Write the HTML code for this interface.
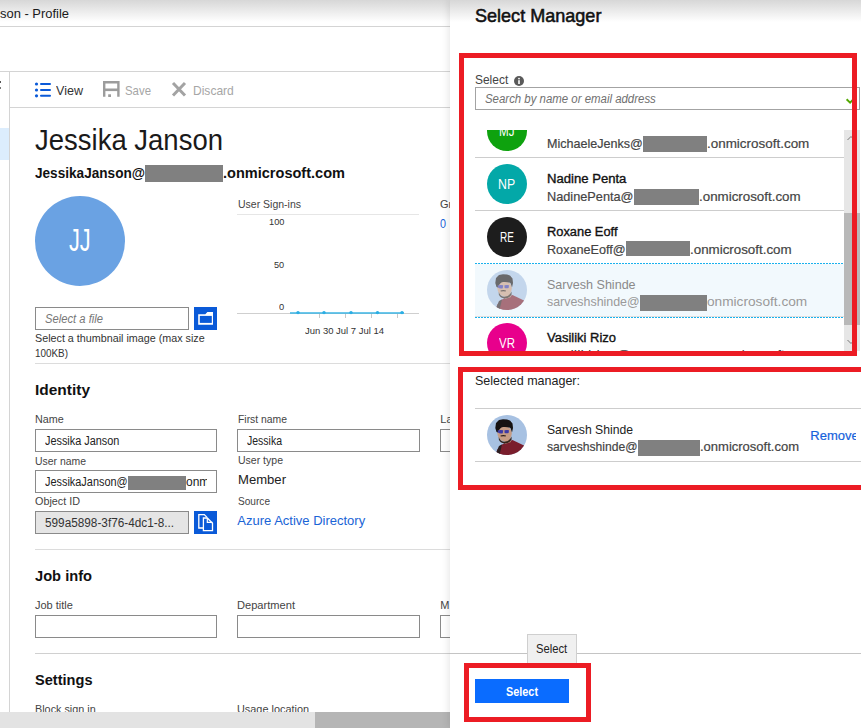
<!DOCTYPE html>
<html><head><meta charset="utf-8">
<style>
html,body{margin:0;padding:0;width:861px;height:728px;overflow:hidden;background:#fff;}
body{position:relative;font-family:"Liberation Sans",sans-serif;}
.a{position:absolute;}
.t{position:absolute;white-space:nowrap;}
.cl{position:absolute;left:0;top:0;width:861px;height:728px;}
.hl{position:absolute;height:1px;}
.vl{position:absolute;width:1px;}
.inp{position:absolute;box-sizing:border-box;border:1px solid #8a8a8a;background:#fff;}
.red{position:absolute;box-sizing:border-box;border:5px solid #ec1c24;}
.rdx{position:absolute;background:#808080;}
.av{position:absolute;width:40px;height:40px;border-radius:50%;}
.sep{position:absolute;left:475px;width:369px;height:1px;background:#cdcdcd;}
</style></head><body>

<!-- top gradient (whole width) -->
<div class="a" style="left:0;top:0;width:861px;height:22px;background:linear-gradient(#d7d7d7,#ffffff)"></div>

<!-- ================= LEFT BLADE ================= -->
<div class="hl" style="left:0;top:26px;width:450px;background:#d4d4d4"></div>
<div class="hl" style="left:0;top:71px;width:450px;background:#d4d4d4"></div>
<div class="vl" style="left:9px;top:71px;height:657px;background:#d4d4d4"></div>
<div class="a" style="left:0;top:128px;width:9px;height:32px;background:#dcedfd"></div>
<div class="a" style="left:0;top:81px;width:1px;height:2px;background:#555"></div>
<div class="a" style="left:0;top:87px;width:1px;height:2px;background:#777"></div>
<div class="hl" style="left:9px;top:107px;width:441px;background:#d4d4d4"></div>

<!-- toolbar icons -->
<svg class="a" style="left:33px;top:81px" width="20" height="18" viewBox="0 0 20 18">
  <g fill="#0b5ad8">
    <circle cx="3.5" cy="3" r="1.6"/><circle cx="3.5" cy="9" r="1.6"/><circle cx="3.5" cy="14.8" r="1.6"/>
    <rect x="7" y="2.1" width="11" height="2" rx="1"/><rect x="7" y="8" width="11" height="2" rx="1"/><rect x="7" y="13.8" width="11" height="2" rx="1"/>
  </g>
</svg>
<svg class="a" style="left:103px;top:81px" width="17" height="17" viewBox="0 0 17 17">
  <path d="M1.2 15.8V1.2h14.2v14.6" fill="none" stroke="#9c9c9c" stroke-width="2.4"/>
  <rect x="1.2" y="7.5" width="14.2" height="2.6" fill="#9c9c9c"/>
  <rect x="5.2" y="13.3" width="2.8" height="2.7" fill="#9c9c9c"/>
</svg>
<svg class="a" style="left:171px;top:81px" width="16" height="17" viewBox="0 0 16 17">
  <path d="M2 2L14 14.5M14 2L2 14.5" stroke="#a3a3a3" stroke-width="3"/>
</svg>

<!-- avatar JJ -->
<div class="a" style="left:35px;top:196px;width:90px;height:90px;border-radius:50%;background:#6aa2e3"></div>
<div class="t" style="left:68.5px;top:225px;font-size:31px;line-height:31px;color:#fff;transform:scaleX(0.7);transform-origin:0 0">JJ</div>

<!-- chart -->
<div class="hl" style="left:237px;top:214px;width:182px;background:#e6e6e6"></div>
<div class="hl" style="left:237px;top:313px;width:182px;background:#cfcfcf"></div>
<svg class="a" style="left:237px;top:305px" width="182" height="14" viewBox="0 0 182 14">
  <g stroke="#c8c8c8" stroke-width="1"><path d="M82.5 8v5M108.5 8v5M134.5 8v5M160.5 8v5"/></g>
  <path d="M53 8.1H167" stroke="#3ab4e4" stroke-width="1.5"/>
  <g fill="#2aaee4"><circle cx="61" cy="7.6" r="1.7"/><circle cx="87" cy="7.6" r="1.7"/><circle cx="114" cy="7.6" r="1.7"/><circle cx="140.5" cy="7.6" r="1.7"/><circle cx="165" cy="7.6" r="1.7"/></g>
</svg>

<!-- file input -->
<div class="inp" style="left:35px;top:307px;width:154px;height:23px"></div>
<div class="a" style="left:194px;top:307px;width:23px;height:23px;background:#0a5ad8"></div>
<svg class="a" style="left:197px;top:311px" width="17" height="15" viewBox="0 0 17 15">
  <path d="M1.2 3.3H8.3L10.4 1H16V13.7H1.2Z" fill="#fff"/>
  <rect x="2.8" y="4.9" width="12" height="7" fill="#0a5ad8"/>
</svg>
<div class="hl" style="left:35px;top:363px;width:415px;background:#dcdcdc"></div>

<!-- identity inputs -->
<div class="inp" style="left:35px;top:429px;width:182px;height:23px"></div>
<div class="inp" style="left:237px;top:429px;width:183px;height:23px"></div>
<div class="inp" style="left:440px;top:429px;width:60px;height:23px"></div>
<div class="inp" style="left:35px;top:470px;width:182px;height:23px"></div>
<div class="rdx" style="left:128px;top:476px;width:58px;height:14px"></div>
<div class="inp" style="left:35px;top:511px;width:154px;height:23px;background:#e5e5e5"></div>
<div class="a" style="left:194px;top:511px;width:23px;height:23px;background:#0a5ad8"></div>
<svg class="a" style="left:194px;top:511px" width="23" height="23" viewBox="0 0 23 23">
  <path d="M9 17H4.8V3.6H10.3L13 6.4" fill="none" stroke="#fff" stroke-width="1.3"/>
  <path d="M9.4 7H13.3L18.5 12.3V19.6H9.4Z" fill="#0a5ad8" stroke="#fff" stroke-width="1.3"/>
  <path d="M13.3 7V11.3H18.5" fill="none" stroke="#fff" stroke-width="1.2"/>
</svg>
<div class="hl" style="left:35px;top:549px;width:415px;background:#dcdcdc"></div>

<!-- job info inputs -->
<div class="inp" style="left:35px;top:615px;width:182px;height:23px"></div>
<div class="inp" style="left:237px;top:615px;width:183px;height:23px"></div>
<div class="inp" style="left:440px;top:615px;width:60px;height:23px"></div>
<div class="hl" style="left:35px;top:653px;width:415px;background:#d0d0d0"></div>

<!-- redaction in header email -->
<div class="rdx" style="left:145px;top:165px;width:78px;height:17px"></div>

<div class="t" style="left:0.3px;top:6.60px;font-size:13px;line-height:13px;color:#1a1a1a;transform:scaleX(0.9948);transform-origin:0 0;">son - Profile</div>
<div class="t" style="left:56.0px;top:83.70px;font-size:13px;line-height:13px;color:#333;transform:scaleX(0.9662);transform-origin:0 0;">View</div>
<div class="t" style="left:124.5px;top:83.70px;font-size:13px;line-height:13px;color:#a6a6a6;transform:scaleX(0.8774);transform-origin:0 0;">Save</div>
<div class="t" style="left:193.2px;top:83.70px;font-size:13px;line-height:13px;color:#a6a6a6;transform:scaleX(0.9259);transform-origin:0 0;">Discard</div>
<div class="t" style="left:34.5px;top:125.75px;font-size:29px;line-height:29px;color:#1a1a1a;transform:scaleX(0.9482);transform-origin:0 0;">Jessika Janson</div>
<div class="t" style="left:35.0px;top:164.80px;font-size:15px;line-height:15px;color:#111;font-weight:700;transform:scaleX(0.9064);transform-origin:0 0;">JessikaJanson@</div>
<div class="t" style="left:223.0px;top:164.80px;font-size:15px;line-height:15px;color:#111;font-weight:700;transform:scaleX(0.9694);transform-origin:0 0;">.onmicrosoft.com</div>
<div class="t" style="left:238.0px;top:198.99px;font-size:11px;line-height:11px;color:#444;transform:scaleX(0.9542);transform-origin:0 0;">User Sign-ins</div>
<div class="t" style="left:268.6px;top:218.15px;font-size:8.8px;line-height:8.8px;color:#333;transform:scaleX(1.0488);transform-origin:0 0;">100</div>
<div class="t" style="left:273.7px;top:260.85px;font-size:8.8px;line-height:8.8px;color:#333;transform:scaleX(1.042);transform-origin:0 0;">50</div>
<div class="t" style="left:278.8px;top:303.35px;font-size:8.8px;line-height:8.8px;color:#333;transform:scaleX(1.0623);transform-origin:0 0;">0</div>
<div class="t" style="left:305.0px;top:326.17px;font-size:9.6px;line-height:9.6px;color:#333;transform:scaleX(0.9868);transform-origin:0 0;">Jun 30 Jul 7 Jul 14</div>
<div class="t" style="left:440.0px;top:198.69px;font-size:11px;line-height:11px;color:#444;">Gr</div>
<div class="t" style="left:440.0px;top:216.70px;font-size:13px;line-height:13px;color:#1a5fd8;transform:scaleX(0.8297);transform-origin:0 0;">0</div>
<div class="t" style="left:45.0px;top:312.64px;font-size:12px;line-height:12px;color:#777;font-style:italic;transform:scaleX(0.935);transform-origin:0 0;">Select a file</div>
<div class="t" style="left:35.0px;top:332.89px;font-size:11px;line-height:11px;color:#333;transform:scaleX(0.9774);transform-origin:0 0;">Select a thumbnail image (max size</div>
<div class="t" style="left:35.0px;top:347.99px;font-size:11px;line-height:11px;color:#333;transform:scaleX(0.8994);transform-origin:0 0;">100KB)</div>
<div class="t" style="left:35.0px;top:381.80px;font-size:15px;line-height:15px;color:#111;font-weight:700;transform:scaleX(1.0312);transform-origin:0 0;">Identity</div>
<div class="t" style="left:35.0px;top:414.19px;font-size:11px;line-height:11px;color:#444;transform:scaleX(0.9781);transform-origin:0 0;">Name</div>
<div class="t" style="left:237.8px;top:414.39px;font-size:11px;line-height:11px;color:#444;transform:scaleX(0.9431);transform-origin:0 0;">First name</div>
<div class="t" style="left:440.3px;top:414.39px;font-size:11px;line-height:11px;color:#444;">La</div>
<div class="t" style="left:45.0px;top:434.54px;font-size:12px;line-height:12px;color:#222;transform:scaleX(0.9068);transform-origin:0 0;">Jessika Janson</div>
<div class="t" style="left:247.0px;top:434.54px;font-size:12px;line-height:12px;color:#222;transform:scaleX(0.8747);transform-origin:0 0;">Jessika</div>
<div class="t" style="left:35.0px;top:455.59px;font-size:11px;line-height:11px;color:#444;transform:scaleX(0.948);transform-origin:0 0;">User name</div>
<div class="t" style="left:237.8px;top:455.39px;font-size:11px;line-height:11px;color:#444;transform:scaleX(0.956);transform-origin:0 0;">User type</div>
<div class="t" style="left:45.0px;top:475.84px;font-size:12px;line-height:12px;color:#222;transform:scaleX(0.9088);transform-origin:0 0;">JessikaJanson@</div>
<div class="cl" style="clip-path:inset(470px 654px 235px 186px)"><div class="t" style="left:186.0px;top:475.84px;font-size:12px;line-height:12px;color:#222;">onm</div></div>
<div class="t" style="left:237.8px;top:473.00px;font-size:13px;line-height:13px;color:#222;transform:scaleX(1.0068);transform-origin:0 0;">Member</div>
<div class="t" style="left:35.0px;top:496.19px;font-size:11px;line-height:11px;color:#444;transform:scaleX(0.9815);transform-origin:0 0;">Object ID</div>
<div class="t" style="left:237.8px;top:495.69px;font-size:11px;line-height:11px;color:#444;transform:scaleX(0.9181);transform-origin:0 0;">Source</div>
<div class="t" style="left:45.0px;top:516.54px;font-size:12px;line-height:12px;color:#333;transform:scaleX(0.9815);transform-origin:0 0;">599a5898-3f76-4dc1-8...</div>
<div class="t" style="left:237.3px;top:513.70px;font-size:13px;line-height:13px;color:#1a64d6;">Azure Active Directory</div>
<div class="t" style="left:35.0px;top:567.90px;font-size:15px;line-height:15px;color:#111;font-weight:700;transform:scaleX(0.9773);transform-origin:0 0;">Job info</div>
<div class="t" style="left:35.0px;top:599.59px;font-size:11px;line-height:11px;color:#444;">Job title</div>
<div class="t" style="left:237.3px;top:599.59px;font-size:11px;line-height:11px;color:#444;transform:scaleX(1.0092);transform-origin:0 0;">Department</div>
<div class="t" style="left:440.3px;top:599.59px;font-size:11px;line-height:11px;color:#444;">M</div>
<div class="t" style="left:35.0px;top:672.30px;font-size:15px;line-height:15px;color:#111;font-weight:700;transform:scaleX(0.9717);transform-origin:0 0;">Settings</div>
<div class="t" style="left:35.0px;top:703.89px;font-size:11px;line-height:11px;color:#444;transform:scaleX(0.9829);transform-origin:0 0;">Block sign in</div>
<div class="t" style="left:237.3px;top:703.89px;font-size:11px;line-height:11px;color:#444;transform:scaleX(0.9894);transform-origin:0 0;">Usage location</div>

<!-- bottom scrollbar -->
<div class="a" style="left:0;top:712px;width:450px;height:16px;background:#e3e3e3"></div>
<div class="a" style="left:315px;top:712px;width:135px;height:16px;background:#b5b5b5"></div>

<!-- ================= RIGHT BLADE ================= -->
<div class="a" style="left:450px;top:0;width:411px;height:728px;background:#fff;box-shadow:-2px 0 7px rgba(0,0,0,0.09)"></div>
<div class="a" style="left:450px;top:0;width:411px;height:22px;background:linear-gradient(#d7d7d7,#ffffff)"></div>

<!-- info icon -->
<svg class="a" style="left:514px;top:76px" width="10" height="10" viewBox="0 0 10 10">
  <circle cx="5" cy="5" r="5" fill="#5a5a5a"/>
  <rect x="4.2" y="4.2" width="1.6" height="3.8" fill="#fff"/><circle cx="5" cy="2.6" r="0.9" fill="#fff"/>
</svg>
<!-- search box -->
<div class="inp" style="left:475px;top:87px;width:385px;height:23px;border-color:#a3a3a3"></div>
<svg class="a" style="left:845px;top:96px" width="10" height="9" viewBox="0 0 10 9">
  <path d="M1.6 3.2L5.1 6.6L9 2.6" fill="none" stroke="#52a800" stroke-width="1.9"/>
</svg>

<!-- list -->
<div class="cl" style="clip-path:inset(130px 17px 377px 0)">
  <div class="av" style="left:487px;top:111px;background:#0ea20e"></div>
  <div class="sep" style="top:157px"></div>
  <div class="av" style="left:487px;top:164px;background:#03a8a8"></div>
  <div class="sep" style="top:210px"></div>
  <div class="av" style="left:487px;top:217px;background:#1d1d1d"></div>
  <div class="a" style="left:475px;top:264px;width:369px;height:53px;background:#f2f9fd"></div>
  <div class="sep" style="top:316px;background:#e0e0e0"></div>
  <div class="a" style="left:475px;top:263px;width:369px;height:1px;background:repeating-linear-gradient(90deg,#1ab1ed 0 2px,transparent 2px 3px)"></div>
  <div class="a" style="left:475px;top:317px;width:369px;height:1px;background:repeating-linear-gradient(90deg,#1ab1ed 0 2px,transparent 2px 3px)"></div>
  <svg class="a" style="left:487px;top:270px;opacity:0.62" width="40" height="40" viewBox="0 0 40 40"><use href="#photo"/></svg>
  <div class="av" style="left:487px;top:323px;background:#e8008c"></div>
  <div class="rdx" style="left:643px;top:136px;width:64px;height:16px"></div>
  <div class="rdx" style="left:634px;top:189px;width:65px;height:16px"></div>
  <div class="rdx" style="left:626px;top:241px;width:64px;height:15px"></div>
  <div class="rdx" style="left:640px;top:295px;width:67px;height:16px"></div>
  <div class="t" style="left:546.8px;top:136.80px;font-size:13px;line-height:13px;color:#444;transform:scaleX(0.9659);transform-origin:0 0;-webkit-text-stroke:0.2px #444;">MichaeleJenks@</div>
<div class="t" style="left:707.0px;top:136.80px;font-size:13px;line-height:13px;color:#444;transform:scaleX(1.0336);transform-origin:0 0;-webkit-text-stroke:0.2px #444;">.onmicrosoft.com</div>
<div class="t" style="left:546.8px;top:172.72px;font-size:12.5px;line-height:12.5px;color:#111;transform:scaleX(1.0482);transform-origin:0 0;-webkit-text-stroke:0.35px #111;">Nadine Penta</div>
<div class="t" style="left:546.8px;top:189.80px;font-size:13px;line-height:13px;color:#444;transform:scaleX(0.9789);transform-origin:0 0;-webkit-text-stroke:0.2px #444;">NadinePenta@</div>
<div class="t" style="left:699.0px;top:189.80px;font-size:13px;line-height:13px;color:#444;transform:scaleX(1.0265);transform-origin:0 0;-webkit-text-stroke:0.2px #444;">.onmicrosoft.com</div>
<div class="t" style="left:546.8px;top:225.92px;font-size:12.5px;line-height:12.5px;color:#111;transform:scaleX(1.0282);transform-origin:0 0;-webkit-text-stroke:0.35px #111;">Roxane Eoff</div>
<div class="t" style="left:546.8px;top:242.50px;font-size:13px;line-height:13px;color:#444;transform:scaleX(0.9716);transform-origin:0 0;-webkit-text-stroke:0.2px #444;">RoxaneEoff@</div>
<div class="t" style="left:690.0px;top:242.50px;font-size:13px;line-height:13px;color:#444;transform:scaleX(1.0265);transform-origin:0 0;-webkit-text-stroke:0.2px #444;">.onmicrosoft.com</div>
<div class="t" style="left:546.8px;top:278.00px;font-size:13px;line-height:13px;color:#8a8a8a;transform:scaleX(0.9653);transform-origin:0 0;">Sarvesh Shinde</div>
<div class="t" style="left:546.8px;top:295.30px;font-size:13px;line-height:13px;color:#9a9a9a;transform:scaleX(0.9544);transform-origin:0 0;">sarveshshinde@</div>
<div class="t" style="left:707.0px;top:295.30px;font-size:13px;line-height:13px;color:#9a9a9a;transform:scaleX(1.0507);transform-origin:0 0;">onmicrosoft.com</div>
<div class="t" style="left:546.8px;top:332.12px;font-size:12.5px;line-height:12.5px;color:#111;transform:scaleX(1.0384);transform-origin:0 0;-webkit-text-stroke:0.35px #111;">Vasiliki Rizo</div>
<div class="cl" style="clip-path:inset(130px 17px 377px 475px)"><div class="t" style="left:546.8px;top:348.00px;font-size:13px;line-height:13px;color:#444;transform:scaleX(1.1598);transform-origin:0 0;">vasilikirizo@</div></div>
<div class="cl" style="clip-path:inset(130px 17px 377px 475px)"><div class="t" style="left:712.0px;top:348.00px;font-size:13px;line-height:13px;color:#444;transform:scaleX(1.0265);transform-origin:0 0;">.onmicrosoft.com</div></div>
<div class="t" style="left:499.0px;top:124.25px;font-size:14px;line-height:14px;color:#fff;transform:scaleX(0.8305);transform-origin:0 0;">MJ</div>
<div class="t" style="left:498.2px;top:176.95px;font-size:14px;line-height:14px;color:#fff;transform:scaleX(0.8792);transform-origin:0 0;">NP</div>
<div class="t" style="left:500.1px;top:230.25px;font-size:14px;line-height:14px;color:#fff;transform:scaleX(0.7147);transform-origin:0 0;">RE</div>
<div class="t" style="left:498.8px;top:335.85px;font-size:14px;line-height:14px;color:#fff;transform:scaleX(0.8175);transform-origin:0 0;">VR</div>
</div>
<!-- scrollbar -->
<div class="a" style="left:844px;top:130px;width:16px;height:221px;background:#e6e6e6"></div>
<div class="a" style="left:844px;top:213px;width:16px;height:112px;background:#b8b8b8"></div>
<svg class="a" style="left:846px;top:134px" width="10" height="8" viewBox="0 0 10 8"><path d="M1.5 6l3.5-3.5 3.5 3.5" fill="none" stroke="#777" stroke-width="1"/></svg>
<svg class="a" style="left:846px;top:338px" width="10" height="8" viewBox="0 0 10 8"><path d="M1.5 2l3.5 3.5 3.5-3.5" fill="none" stroke="#777" stroke-width="1"/></svg>

<!-- selected manager -->
<div class="hl" style="left:475px;top:408px;width:386px;background:#cdcdcd"></div>
<svg class="a" style="left:487px;top:415px" width="40" height="40" viewBox="0 0 40 40"><use href="#photo"/></svg>
<div class="rdx" style="left:638px;top:440px;width:62px;height:16px"></div>
<div class="hl" style="left:475px;top:461px;width:386px;background:#cdcdcd"></div>

<!-- footer -->
<div class="hl" style="left:450px;top:653px;width:411px;background:#c4c4c4"></div>
<div class="a" style="left:527px;top:634px;width:50px;height:31px;box-sizing:border-box;background:#f0f0f0;border:1px solid #cfcfcf"></div>
<div class="a" style="left:475px;top:679px;width:94px;height:24px;background:#0a6cff"></div>

<div class="t" style="left:475.2px;top:7.34px;font-size:18.5px;line-height:18.5px;color:#111;transform:scaleX(0.9755);transform-origin:0 0;-webkit-text-stroke:0.55px #111;">Select Manager</div>
<div class="t" style="left:475.1px;top:73.00px;font-size:13px;line-height:13px;color:#444;transform:scaleX(0.9189);transform-origin:0 0;">Select</div>
<div class="t" style="left:485.0px;top:93.24px;font-size:12px;line-height:12px;color:#707070;font-style:italic;transform:scaleX(0.952);transform-origin:0 0;">Search by name or email address</div>
<div class="t" style="left:474.8px;top:374.20px;font-size:13px;line-height:13px;color:#222;transform:scaleX(0.9622);transform-origin:0 0;">Selected manager:</div>
<div class="t" style="left:546.9px;top:423.20px;font-size:13px;line-height:13px;color:#222;transform:scaleX(0.937);transform-origin:0 0;">Sarvesh Shinde</div>
<div class="t" style="left:546.9px;top:440.40px;font-size:13px;line-height:13px;color:#444;transform:scaleX(0.9328);transform-origin:0 0;-webkit-text-stroke:0.2px #444;">sarveshshinde@</div>
<div class="t" style="left:700.0px;top:440.40px;font-size:13px;line-height:13px;color:#444;-webkit-text-stroke:0.2px #444;">.onmicrosoft.com</div>
<div class="cl" style="clip-path:inset(400px 5px 258px 800px)"><div class="t" style="left:810.3px;top:429.20px;font-size:13px;line-height:13px;color:#1662dc;-webkit-text-stroke:0.2px #1662dc;">Remove</div></div>
<div class="t" style="left:536.3px;top:642.84px;font-size:12px;line-height:12px;color:#222;transform:scaleX(0.9355);transform-origin:0 0;">Select</div>
<div class="t" style="left:506.0px;top:685.74px;font-size:12px;line-height:12px;color:#fff;font-weight:700;transform:scaleX(0.9051);transform-origin:0 0;">Select</div>

<!-- red annotation boxes -->
<div class="red" style="left:459px;top:53px;width:398px;height:303px"></div>
<div class="red" style="left:458px;top:367px;width:408px;height:123px"></div>
<div class="red" style="left:464px;top:663px;width:127px;height:59px"></div>

<svg width="0" height="0" style="position:absolute">
  <defs>
    <clipPath id="pc"><circle cx="20" cy="20" r="20"/></clipPath>
    <g id="photo">
      <g clip-path="url(#pc)">
        <rect width="40" height="40" fill="#a7c1e2"/>
        <path d="M9 42 L10 35 L14 30 L19 27.5 L25.5 25 L37 30.5 L38 42 Z" fill="#7a1e2c"/>
        <path d="M9.5 37 L12 31 L15 29.5 L12.5 40 Z" fill="#2a1e20"/>
        <path d="M17 24 L23 23 L24 27 L18 29 Z" fill="#b58a74"/>
        <ellipse cx="17.6" cy="18.6" rx="7.2" ry="7.6" fill="#c69c84"/>
        <path d="M8.3 13 L9 8 L12 5 L16 4.2 L20 4.6 L23 5.5 L25.5 8.5 L26 13 L25 17.5 L23.5 13 Q20 11.5 16 12 Q12.5 12.5 11 17.5 L9.5 17 Z" fill="#161212"/>
        <path d="M10.5 15.5 Q13 14.8 16.2 15.3 L15.8 18.3 Q12.5 19 11 17.6 Z" fill="#3d3aa6"/>
        <path d="M17.5 15.3 Q20 14.8 22 15.2 L21.6 18 Q19 18.8 17.5 17.8 Z" fill="#3d3aa6"/>
        <path d="M13.5 20.5 Q16.5 19.3 19 20.5 L18.6 21.5 Q16.2 21 13.8 21.6 Z" fill="#2a1c16"/>
        <path d="M11.8 22 Q13 26.5 18 26.8 Q22.5 26.5 24.5 21.5 L24.6 24.5 Q22 28.5 17.5 28.5 Q13 28 11.8 24.5 Z" fill="#34241c"/>
      </g>
    </g>
  </defs>
</svg>
</body></html>
